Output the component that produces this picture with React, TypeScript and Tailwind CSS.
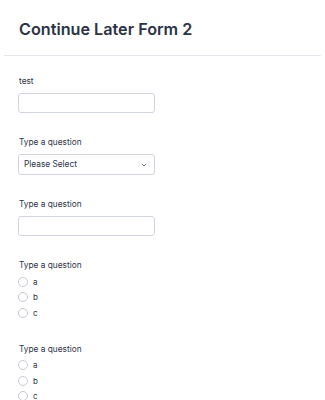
import React from "react";

const font = { fontFamily: "Inter, 'Noto Sans', sans-serif" };

function Label({ children }: { children: React.ReactNode }) {
  return (
    <div className="text-[8.3px] leading-[12px] text-[#2c3345] font-normal">{children}</div>
  );
}

function TextInput() {
  return (
    <div className="mt-[6px] w-[137px] h-[20px] rounded-[3px] border border-[#d1d5de] bg-white" />
  );
}

function Radios() {
  return (
    <div className="mt-[3px] flex flex-col">
      {["a", "b", "c"].map((l) => (
        <div key={l} className="h-[15.5px] flex items-center">
          <div className="w-[10px] h-[10px] rounded-full border border-[#c6cad3] bg-white" />
          <span className="ml-[5px] text-[8px] leading-none text-[#2c3345]">{l}</span>
        </div>
      ))}
    </div>
  );
}

export default function App() {
  return (
    <div className="w-[325px] h-[400px] overflow-hidden bg-white" style={font}>
      <div className="px-[19px] pt-[21px] pb-[17px]">
        <h1 className="text-[16.2px] leading-[17px] font-semibold text-[#2c3345]">
          Continue Later Form 2
        </h1>
      </div>
      <div className="mx-[4px] h-px bg-[#e5e7ec]" />
      <div className="px-[18px] pt-[19px] flex flex-col">
        <div className="pl-[1px]">
          <Label>test</Label>
        </div>
        <TextInput />

        <div className="mt-[23px] pl-[1px]">
          <Label>Type a question</Label>
        </div>
        <div className="mt-[6px] w-[137px] h-[21px] rounded-[3px] border border-[#d1d5de] bg-white flex items-center justify-between pl-[5px] pr-[7px]">
          <span className="text-[8.3px] text-[#2c3345]">Please Select</span>
          <svg width="6" height="4" viewBox="0 0 6 4" fill="none">
            <path d="M0.8 0.8 L3 3 L5.2 0.8" stroke="#6f7686" strokeWidth="1" />
          </svg>
        </div>

        <div className="mt-[23px] pl-[1px]">
          <Label>Type a question</Label>
        </div>
        <TextInput />

        <div className="mt-[23px] pl-[1px]">
          <Label>Type a question</Label>
        </div>
        <Radios />

        <div className="mt-[22px] pl-[1px]">
          <Label>Type a question</Label>
        </div>
        <Radios />
      </div>
    </div>
  );
}
